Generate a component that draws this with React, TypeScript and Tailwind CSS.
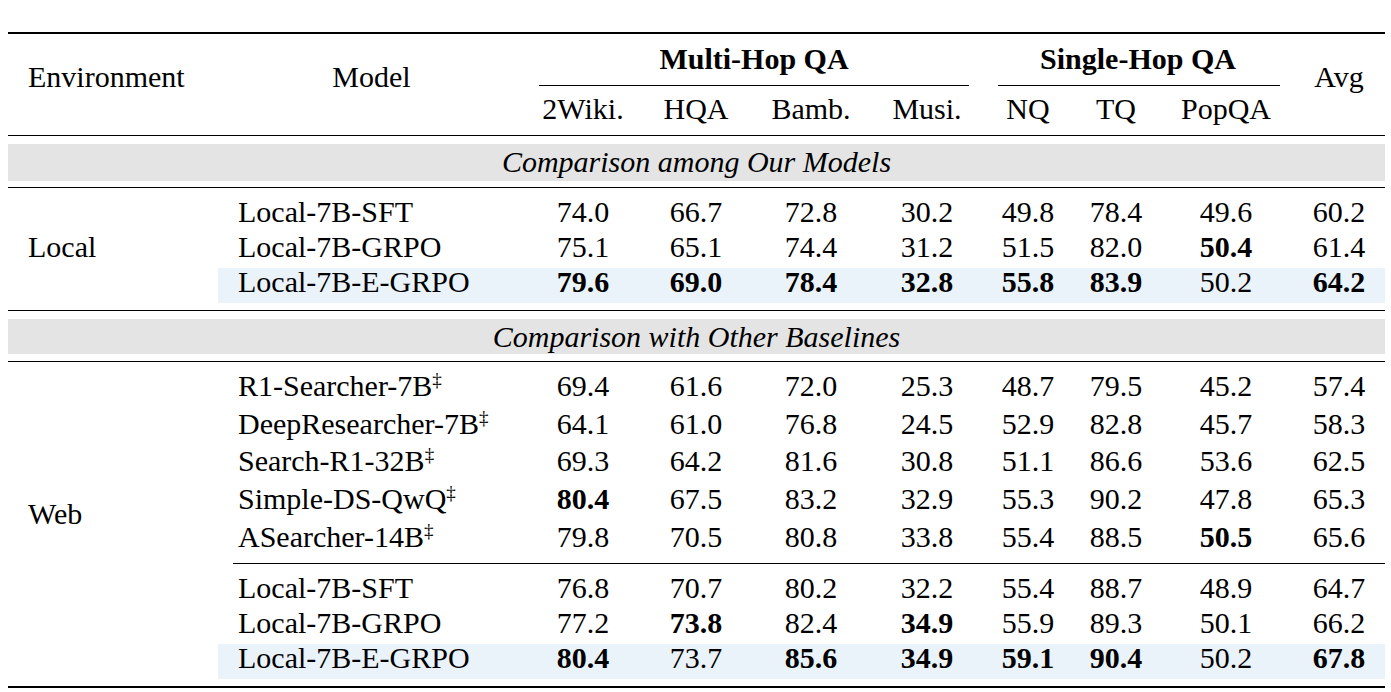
const cols =
  "grid grid-cols-[210px_307px_116px_110px_120px_112px_90px_86px_134px_92px]";

type Entry = {
  name: string;
  v: string[];
  b?: number[];
  hl?: boolean;
  dag?: boolean;
};

const localRows: Entry[] = [
  { name: "Local-7B-SFT", v: ["74.0", "66.7", "72.8", "30.2", "49.8", "78.4", "49.6", "60.2"] },
  { name: "Local-7B-GRPO", v: ["75.1", "65.1", "74.4", "31.2", "51.5", "82.0", "50.4", "61.4"], b: [6] },
  {
    name: "Local-7B-E-GRPO",
    v: ["79.6", "69.0", "78.4", "32.8", "55.8", "83.9", "50.2", "64.2"],
    b: [0, 1, 2, 3, 4, 5, 7],
    hl: true,
  },
];

const baselineRows: Entry[] = [
  { name: "R1-Searcher-7B", dag: true, v: ["69.4", "61.6", "72.0", "25.3", "48.7", "79.5", "45.2", "57.4"] },
  { name: "DeepResearcher-7B", dag: true, v: ["64.1", "61.0", "76.8", "24.5", "52.9", "82.8", "45.7", "58.3"] },
  { name: "Search-R1-32B", dag: true, v: ["69.3", "64.2", "81.6", "30.8", "51.1", "86.6", "53.6", "62.5"] },
  { name: "Simple-DS-QwQ", dag: true, v: ["80.4", "67.5", "83.2", "32.9", "55.3", "90.2", "47.8", "65.3"], b: [0] },
  { name: "ASearcher-14B", dag: true, v: ["79.8", "70.5", "80.8", "33.8", "55.4", "88.5", "50.5", "65.6"], b: [6] },
];

const webOurs: Entry[] = [
  { name: "Local-7B-SFT", v: ["76.8", "70.7", "80.2", "32.2", "55.4", "88.7", "48.9", "64.7"] },
  { name: "Local-7B-GRPO", v: ["77.2", "73.8", "82.4", "34.9", "55.9", "89.3", "50.1", "66.2"], b: [1, 3] },
  {
    name: "Local-7B-E-GRPO",
    v: ["80.4", "73.7", "85.6", "34.9", "59.1", "90.4", "50.2", "67.8"],
    b: [0, 2, 3, 4, 5, 7],
    hl: true,
  },
];

function Row({ e }: { e: Entry }) {
  const h = e.dag ? "h-[37.75px] pt-[2.75px]" : "h-[35px]";
  const bg = e.hl ? "bg-[#eaf2fa]" : "";
  return (
    <>
      <div className={`${h} ${bg} pl-[20px] leading-[28px] whitespace-nowrap`}>
        {e.name}
        {e.dag && <span className="relative -top-[10px] text-[19px]">‡</span>}
      </div>
      {e.v.map((x, i) => (
        <div
          key={i}
          className={`${h} ${bg} text-center leading-[28px] ${e.b?.includes(i) ? "font-bold" : ""}`}
        >
          {x}
        </div>
      ))}
    </>
  );
}

function Band({ text, h }: { text: string; h: string }) {
  return (
    <div className={`${h} bg-[#e4e4e4] text-center italic leading-[35px]`}>{text}</div>
  );
}

export default function App() {
  return (
    <div className="min-h-screen bg-white pt-[32px] [font-family:'Liberation_Serif','Times_New_Roman',serif] text-[30px] text-black">
      <div className="ml-[8px] w-[1377px]">
        <div className="h-[2px] bg-black" />

        {/* header */}
        <div className={`${cols} mt-[7px] grid-rows-[35px_15px_35px]`}>
          <div className="row-span-3 pl-[20px] pt-[22px] leading-[28px]">Environment</div>
          <div className="row-span-3 pt-[22px] text-center leading-[28px]">Model</div>
          <div className="col-span-4 pt-[4px] text-center font-bold leading-[28px]">Multi-Hop QA</div>
          <div className="col-span-3 pt-[4px] text-center font-bold leading-[28px]">Single-Hop QA</div>
          <div className="row-span-3 pt-[22px] text-center leading-[28px]">Avg</div>
          <div className="col-span-4 px-[14px] pt-[9px]">
            <div className="h-px bg-black" />
          </div>
          <div className="col-span-3 pl-[15px] pr-[13px] pt-[9px]">
            <div className="h-px bg-black" />
          </div>
          {["2Wiki.", "HQA", "Bamb.", "Musi.", "NQ", "TQ", "PopQA"].map((t) => (
            <div key={t} className="pt-[4px] text-center leading-[28px]">
              {t}
            </div>
          ))}
        </div>

        <div className="mt-[9px] h-px bg-black" />
        <div className="mt-[8px]">
          <Band text="Comparison among Our Models" h="h-[37px]" />
        </div>
        <div className="mt-[6px] h-px bg-black" />

        {/* local */}
        <div className={`${cols} mt-[10px]`}>
          {localRows.map((e, i) => (
            <div key={e.name} className="contents">
              <div className="h-[35px] pl-[20px] leading-[28px]">{i === 1 ? "Local" : ""}</div>
              <Row e={e} />
            </div>
          ))}
        </div>

        <div className="mt-[7px] h-px bg-black" />
        <div className="mt-[8px]">
          <Band text="Comparison with Other Baselines" h="h-[35px]" />
        </div>
        <div className="mt-[7px] h-px bg-black" />

        {/* web */}
        <div className={`${cols} mt-[7px]`}>
          <div className="row-span-9 pl-[20px] pt-[131px] leading-[28px]">Web</div>
          {baselineRows.map((e) => (
            <Row key={e.name} e={e} />
          ))}
          <div className="col-span-9 h-[16px] pl-[15px] pt-[5px]">
            <div className="h-px bg-black" />
          </div>
          {webOurs.map((e) => (
            <Row key={e.name} e={e} />
          ))}
        </div>

        <div className="mt-[7px] h-[2px] bg-black" />
      </div>
    </div>
  );
}
